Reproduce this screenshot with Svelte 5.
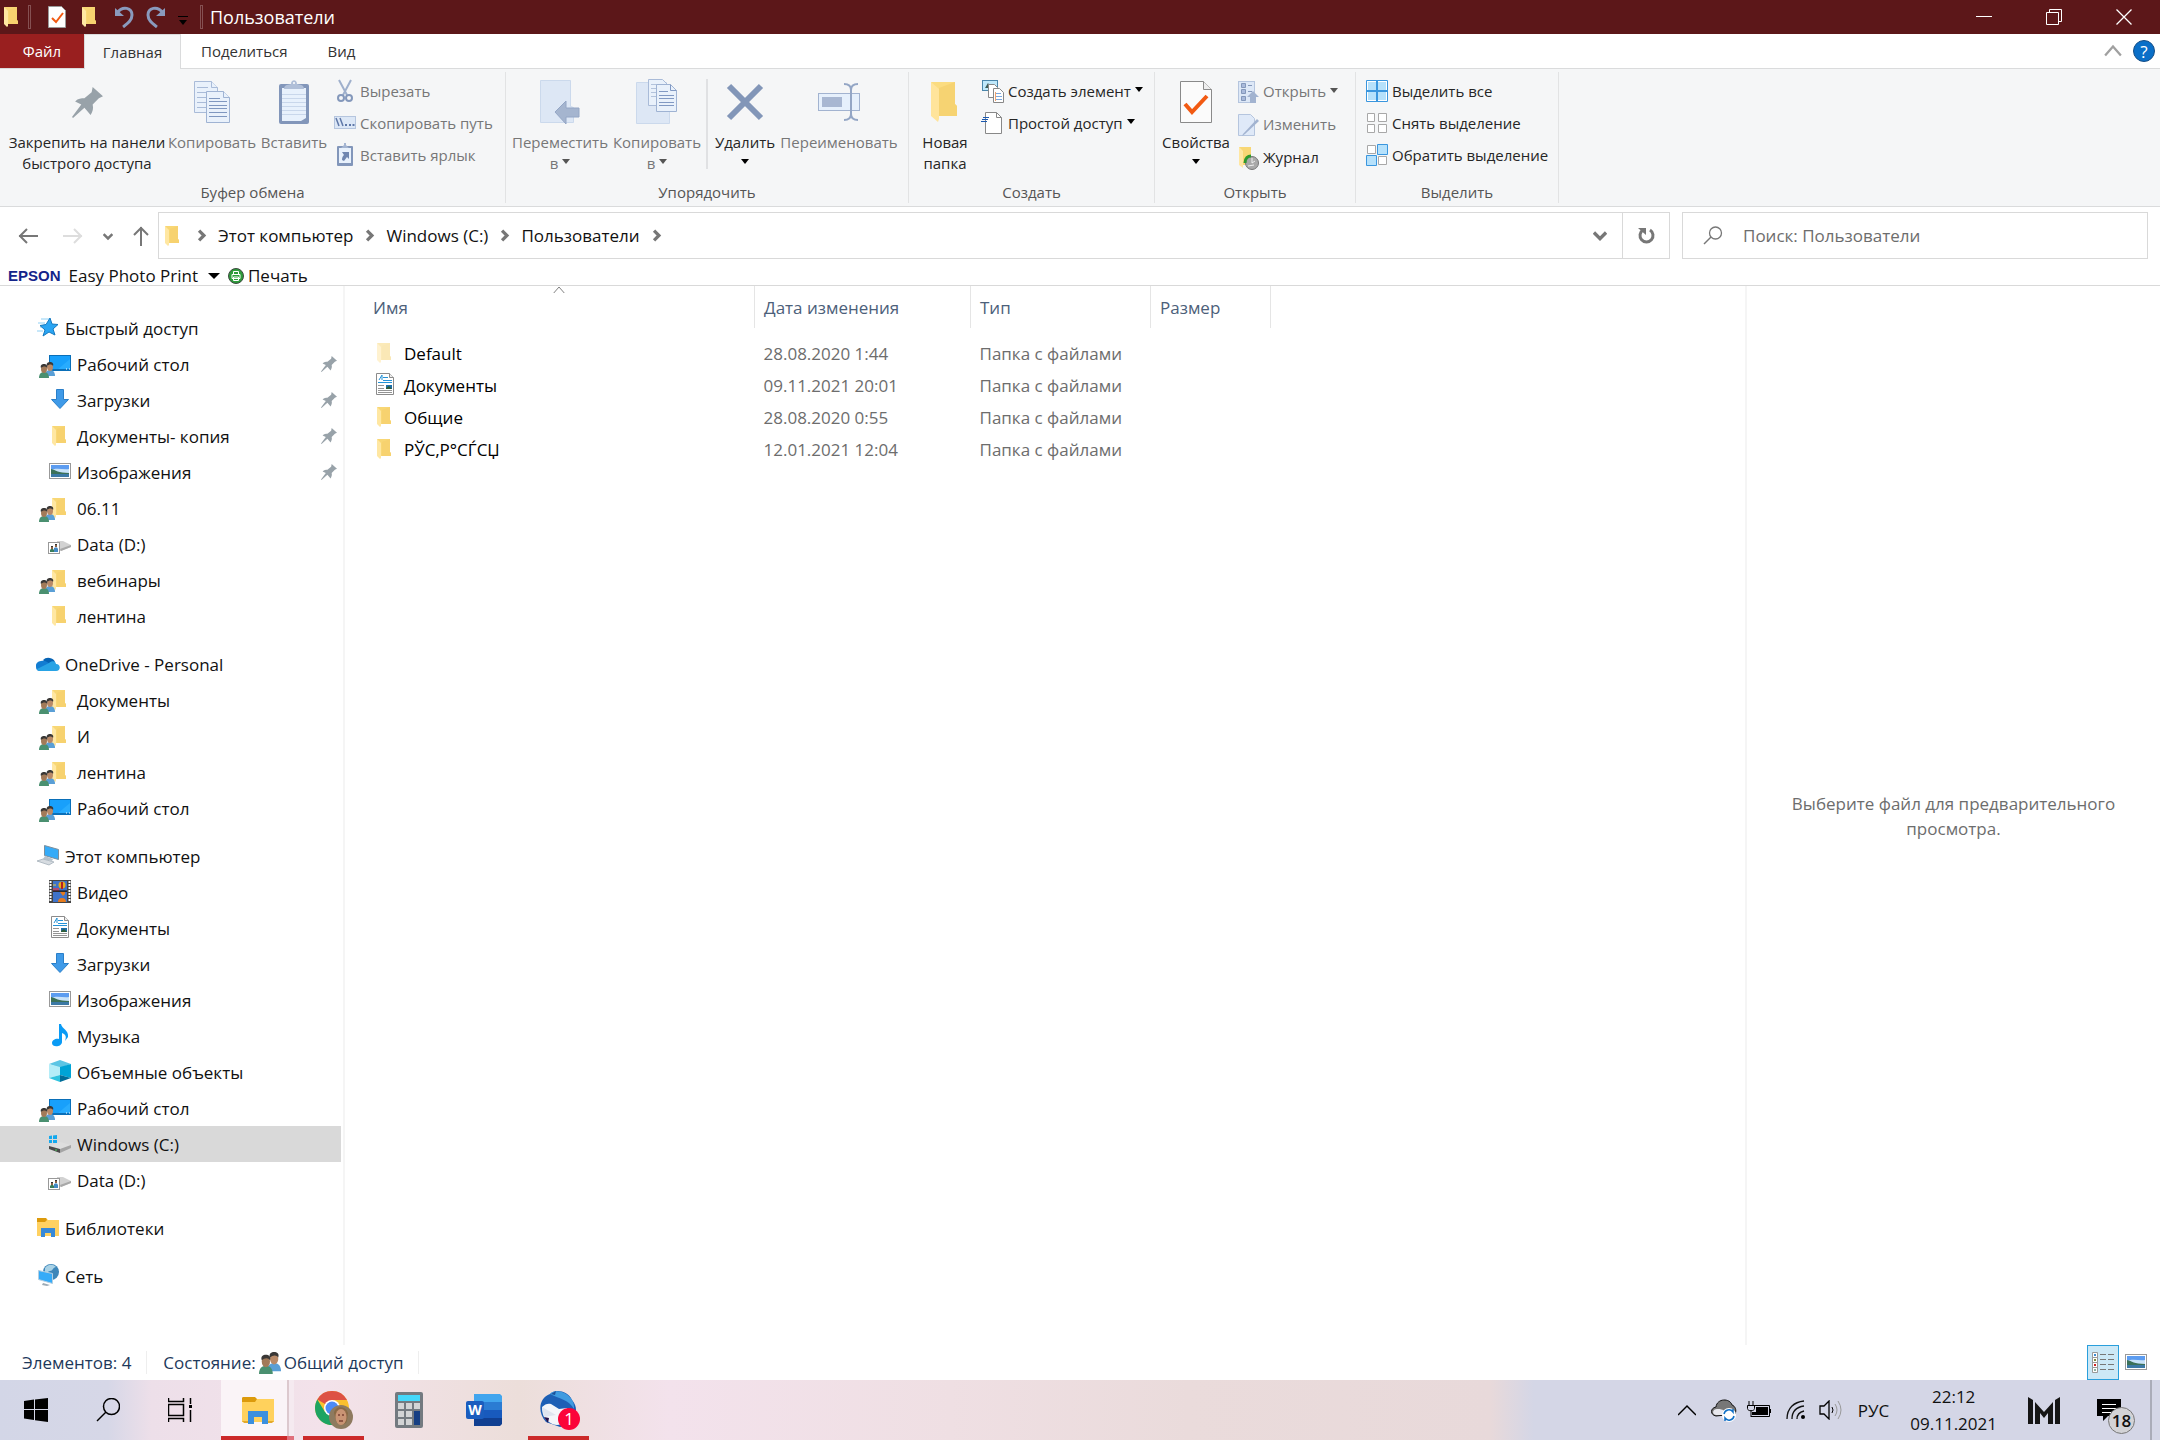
<script>
  const sidebar = [
    {
      label: 'Быстрый доступ',
      icon: 'star',
      items: [
        { label: 'Рабочий стол', icon: 'desktop', shared: true, pinned: true },
        { label: 'Загрузки', icon: 'download', pinned: true },
        { label: 'Документы- копия', icon: 'folder', pinned: true },
        { label: 'Изображения', icon: 'picture', pinned: true },
        { label: '06.11', icon: 'folder', shared: true },
        { label: 'Data (D:)', icon: 'drive' },
        { label: 'вебинары', icon: 'folder', shared: true },
        { label: 'лентина', icon: 'folder' }
      ]
    },
    {
      label: 'OneDrive - Personal',
      icon: 'onedrive',
      items: [
        { label: 'Документы', icon: 'folder', shared: true },
        { label: 'И', icon: 'folder', shared: true },
        { label: 'лентина', icon: 'folder', shared: true },
        { label: 'Рабочий стол', icon: 'desktop', shared: true }
      ]
    },
    {
      label: 'Этот компьютер',
      icon: 'computer',
      items: [
        { label: 'Видео', icon: 'video' },
        { label: 'Документы', icon: 'document' },
        { label: 'Загрузки', icon: 'download' },
        { label: 'Изображения', icon: 'picture' },
        { label: 'Музыка', icon: 'music' },
        { label: 'Объемные объекты', icon: 'cube' },
        { label: 'Рабочий стол', icon: 'desktop', shared: true },
        { label: 'Windows (C:)', icon: 'windrive' },
        { label: 'Data (D:)', icon: 'drive' }
      ]
    },
    { label: 'Библиотеки', icon: 'library', items: [] },
    { label: 'Сеть', icon: 'network', items: [] }
  ]

  const files = [
    { name: 'Default', date: '28.08.2020 1:44', type: 'Папка с файлами', icon: 'folder', faded: true },
    { name: 'Документы', date: '09.11.2021 20:01', type: 'Папка с файлами', icon: 'document' },
    { name: 'Общие', date: '28.08.2020 0:55', type: 'Папка с файлами', icon: 'folder' },
    { name: 'РЎС‚Р°СЃСЏ', date: '12.01.2021 12:04', type: 'Папка с файлами', icon: 'folder' }
  ]

  const crumbs = ['Этот компьютер', 'Windows (C:)', 'Пользователи']

  let selected = $state('Windows (C:)')
  let query = $state('')
</script>

{#snippet person(x, y, shirt, skin)}
  <g transform="translate({x} {y})">
    <path d="M0 14c0-4 2-6 5-6s5 2 5 6z" fill={shirt} />
    <ellipse cx="5" cy="5" rx="3" ry="4" fill={skin} />
    <path d="M2 4C1 1 3 0 5 0s4 1 3 4C7 2 4 2 2 4z" fill="#3a3836" />
  </g>
{/snippet}

{#snippet people(size)}
  <svg class="icon" width={size} height={size} viewBox="0 0 16 16" aria-hidden="true">
    {@render person(6, 0, '#5a9fd6', '#b98a68')}
    {@render person(0, 2, '#4a9070', '#a27a58')}
  </svg>
{/snippet}

{#snippet pin(size)}
  <svg class="icon" width={size} height={size} viewBox="0 0 30 30" aria-hidden="true">
    <path d="M20 0l10 9-4 2-6 6c1 4 0 7-2 10l-6-7L1 30l-1-1L9 17 3 14c3-3 6-3 9-3l7-6z" fill="#98a2a9" />
  </svg>
{/snippet}

{#snippet chevron(size, d, color, width)}
  <svg class="icon" width={size} height={size} viewBox="0 0 16 16" aria-hidden="true">
    <path {d} fill="none" stroke={color} stroke-width={width} />
  </svg>
{/snippet}

{#snippet caret(color)}
  <svg class="caret" width="8" height="5" viewBox="0 0 8 5" aria-hidden="true"><path d="M0 0h8L4 5z" fill={color} /></svg>
{/snippet}

{#snippet tile(name)}
  {#if name === 'folder'}
    <svg class="icon" width="24" height="24" viewBox="0 0 24 24" aria-hidden="true">
      <path d="M4 2h13v13l1 1v3H8z" fill="#f8d775" />
      <path d="M9 5l8-3v13l1 1v3H9z" fill="#f6cf6b" opacity=".6" />
      <path d="M4 2l4 4v15l-1 1-3-3z" fill="#ffe7a2" />
    </svg>
  {:else if name === 'star'}
    <svg class="icon" width="24" height="24" viewBox="0 0 24 24" aria-hidden="true">
      <path d="M5 3h9M2 7h7M4 11h6M1 15h6" stroke="#8fd0f5" stroke-width="1" />
      <path d="M14 2l2 6 6 .5-5 4.500 2 6-6-3-6 4 2-6-5-4.500 6-1z" fill="#2aa5f3" stroke="#1579c0" />
    </svg>
  {:else if name === 'desktop'}
    <svg class="icon" width="24" height="24" viewBox="0 0 24 24" aria-hidden="true">
      <rect x="1.500" y="3.500" width="21" height="15" fill="#18a0fb" stroke="#0a6fb8" />
      <path d="M9 18L22 7v11z" fill="#2fb0ff" opacity=".7" />
      <path d="M2 17.500h20" stroke="#0a6fb8" /><path d="M18 17h1M21 17h1" stroke="#fff" />
    </svg>
  {:else if name === 'download'}
    <svg class="icon" width="24" height="24" viewBox="0 0 24 24" aria-hidden="true">
      <path d="M8.500 1.500h7v10h5L12 20.500l-8.500-9h5z" fill="#3f9ae8" stroke="#2a7fc9" />
    </svg>
  {:else if name === 'picture'}
    <svg class="icon" width="24" height="24" viewBox="0 0 24 24" aria-hidden="true">
      <rect x="1.500" y="3.500" width="21" height="15" fill="#fff" stroke="#999" />
      <rect x="3" y="5" width="18" height="12" fill="#5c9cf0" />
      <path d="M3 10c6-3 12 0 18-1v4H3z" fill="#c8e2f8" />
      <path d="M3 9c5 1 7 4 18 4v1H3z" fill="#3c7158" />
      <path d="M3 14h18v3H3z" fill="#3c79a5" />
    </svg>
  {:else if name === 'drive'}
    <svg class="icon" width="24" height="24" viewBox="0 0 24 24" aria-hidden="true">
      <path d="M9 9h6l8 4v2l-10 4H9z" fill="#d2d2d2" /><path d="M12 17l11-4v2l-10 4z" fill="#a8a8a8" />
      <rect x=".5" y="10.500" width="11" height="11" fill="#fff" stroke="#999" />
      <path d="M2 20v-2q2-3 4 0v2z" fill="#3a7d5b" /><path d="M6 20v-4q3-2 4 1v3z" fill="#4389c4" />
      <path d="M3 16h2M7 14h2" stroke="#8d6243" stroke-width="2" /><path d="M3 14.500h2M7 12.500h2" stroke="#333" />
    </svg>
  {:else if name === 'windrive'}
    <svg class="icon" width="24" height="24" viewBox="0 0 24 24" aria-hidden="true">
      <path d="M1 14l11-4 11 3-11 4z" fill="#dedede" /><path d="M1 14l11 3v4L1 17z" fill="#4a4a4a" />
      <path d="M12 17l11-4v3l-11 5z" fill="#a5a5a5" /><path d="M7 18h2" stroke="#4ad35b" />
      <path d="M1 4l3-.5V7H1zM5 3.400L9 3v4H5zM1 8h3v3H1zM5 8h4v3H5z" fill="#14a9ee" />
    </svg>
  {:else if name === 'onedrive'}
    <svg class="icon" width="24" height="24" viewBox="0 0 24 24" aria-hidden="true">
      <path d="M7 8a7 6 0 0 1 12 2l-6 5z" fill="#0663b4" />
      <path d="M0 15a5 5 0 0 1 5-6c4-1 6 1 9 3l-8 7H4a4 4 0 0 1-4-4z" fill="#127dd2" />
      <path d="M13 11c3-3 7-2 7 1 5 0 5 7 0 7H5c-3 0-4-1-4-2z" fill="#28a3e5" />
    </svg>
  {:else if name === 'computer'}
    <svg class="icon" width="24" height="24" viewBox="0 0 24 24" aria-hidden="true">
      <path d="M8.500 1.500l14 4v10l-14-4z" fill="#35abf8" stroke="#7b8f9e" />
      <path d="M9 12l8 3-1 2-9-2z" fill="#b7c2cc" />
      <path d="M1 17l6-2 11 3-5 3z" fill="#d7dce1" stroke="#9ba7b2" stroke-width=".7" />
    </svg>
  {:else if name === 'video'}
    <svg class="icon" width="24" height="24" viewBox="0 0 24 24" aria-hidden="true">
      <path d="M1 0h22v23H1z" fill="#444" /><path d="M5 1h14v10H5zM5 12h14v10H5z" fill="#3f73c9" />
      <path d="M2.500 1v21M21.500 1v21" stroke="#fff" stroke-width="2" stroke-dasharray="2 1" />
      <circle cx="14" cy="5" r="3.500" fill="#e8a91a" /><path d="M13 2h2v7h-2z" fill="#b52222" />
      <path d="M5 8h6v3H5z" fill="#b04c72" /><path d="M12 12h5v2l-2 2zM10 22a4 4 0 0 1 8 0z" fill="#e57b1d" />
      <path d="M5 5h3" stroke="#e9c83d" /><path d="M5 11h14" stroke="#111" />
    </svg>
  {:else if name === 'document'}
    <svg class="icon" width="24" height="24" viewBox="0 0 24 24" aria-hidden="true">
      <path d="M3.500.5h13l4 4v17h-17z" fill="#fff" stroke="#8b8b8b" /><path d="M16.500.5v4h4" fill="#eee" stroke="#8b8b8b" />
      <path d="M6 7l3-5v5M10 4.500h5M10 7.500h9M5 9.500h14" fill="none" stroke="#2492d6" />
      <path d="M5 12.500h6M5 15.500h6M5 17.500h14M5 19.500h14" stroke="#949494" /><path d="M13 12h6v4h-6z" fill="#1e6ea8" /><path d="M13 15l3-2 3 3h-6z" fill="#2f5d39" />
    </svg>
  {:else if name === 'music'}
    <svg class="icon" width="24" height="24" viewBox="0 0 24 24" aria-hidden="true">
      <path d="M11 0h2c1 5 8 6 7 13l-3 4c2-5 0-7-3-8v9c0 5-10 6-10 1 0-3 4-5 7-4z" fill="#0a9bf5" />
    </svg>
  {:else if name === 'cube'}
    <svg class="icon" width="24" height="24" viewBox="0 0 24 24" aria-hidden="true">
      <path d="M1 4l11-4 11 4-11 4z" fill="#5cc5e4" /><path d="M1 4l11 3v8L1 18z" fill="#b4edf8" /><path d="M23 4L12 7v8l11 3z" fill="#00a4d6" />
      <path d="M12 15L1 18l11 4z" fill="#30c3df" /><path d="M12 15l11 3-11 4z" fill="#006d99" />
    </svg>
  {:else if name === 'library'}
    <svg class="icon" width="24" height="24" viewBox="0 0 24 24" aria-hidden="true">
      <path d="M1 2h9l2 2h11v16H1z" fill="#ffd161" /><path d="M1 2h9l1 2-2 2H1z" fill="#dc9a0c" />
      <path d="M5 12h14v9h-4v-4H9v4H5z" fill="#3789d8" />
    </svg>
  {:else if name === 'network'}
    <svg class="icon" width="24" height="24" viewBox="0 0 24 24" aria-hidden="true">
      <circle cx="15" cy="8" r="8" fill="#3d86b9" /><path d="M9 4c3-4 8-4 11-1-3 0-3 4-6 4s-2 4-5 3z" fill="#a9d2e6" />
      <path d="M2.500 6.500l14 3v10l-14-4z" fill="#35abf8" stroke="#b6cfe0" /><path d="M7 19l7 2-3 1-5-1z" fill="#9eabb5" />
    </svg>
  {/if}
{/snippet}

<div class="window">
  <header class="titlebar">
    <div class="quick">
      <span class="app-icon">{@render tile('folder')}</span>
      <i class="bar"></i>
      <button aria-label="Свойства">
        <svg class="icon" width="18" height="22" viewBox="0 0 18 22" aria-hidden="true">
          <path d="M.5.5h13l4 4v17H.5z" fill="#fff" stroke="#9a9a9a" /><path d="M4 12l4 4 7-9" fill="none" stroke="#f25a12" stroke-width="2" />
        </svg>
      </button>
      <button aria-label="Новая папка">{@render tile('folder')}</button>
      <button aria-label="Отменить">
        <svg class="icon" width="20" height="22" viewBox="0 0 20 22" aria-hidden="true">
          <path d="M3 7C9-1 18 2 18 9c0 5-4 8-9 12" fill="none" stroke="#8a9abd" stroke-width="3" /><path d="M1 2v8h9z" fill="#8a9abd" />
        </svg>
      </button>
      <button aria-label="Вернуть">
        <svg class="icon" width="20" height="22" viewBox="0 0 20 22" aria-hidden="true">
          <path d="M17 7C11-1 2 2 2 9c0 5 4 8 9 12" fill="none" stroke="#8a9abd" stroke-width="3" /><path d="M19 2v8h-9z" fill="#8a9abd" />
        </svg>
      </button>
      <button aria-label="Настройка панели">
        <svg class="icon" width="10" height="16" viewBox="0 0 10 16" aria-hidden="true"><path d="M0 7.500h10" stroke="#000" /><path d="M1 11h8l-4 5z" fill="#000" /></svg>
      </button>
      <i class="bar"></i>
    </div>
    <h1>Пользователи</h1>
    <div class="window-buttons">
      <button aria-label="Свернуть"><svg width="16" height="16" viewBox="0 0 16 16"><path d="M0 7.500h16" stroke="#fff" /></svg></button>
      <button aria-label="Восстановить"><svg width="16" height="16" viewBox="0 0 16 16"><path d="M.5 3.500h12v12H.5zM3.500 3V.5h12v12H13" fill="none" stroke="#fff" /></svg></button>
      <button aria-label="Закрыть"><svg width="16" height="16" viewBox="0 0 16 16"><path d="M.5.5l15 15M15.500.5l-15 15" stroke="#fff" stroke-width="1.300" /></svg></button>
    </div>
  </header>

  <nav class="tabs" aria-label="Лента">
    <button class="file">Файл</button>
    <button class="current">Главная</button>
    <button>Поделиться</button>
    <button>Вид</button>
    <div class="tabs-end">
      <button aria-label="Свернуть ленту">{@render chevron(18, 'M1 12l7-8 7 8', '#a0a0a0', 2)}</button>
      <button class="help" aria-label="Справка">?</button>
    </div>
  </nav>

  <div class="ribbon">
    <section class="group clipboard">
      <div class="tools">
        <button class="big pin-tool">
          <span class="art">{@render pin(31)}</span>
          <span>Закрепить на панели<br />быстрого доступа</span>
        </button>
        <button class="big copy" disabled>
          <span class="art">
            <svg width="36" height="42" viewBox="0 0 36 42" aria-hidden="true">
              <g fill="#e9f1fb" stroke="#a9bbd8"><path d="M.5.5h17l6 6v25H.5z" /><path d="M17.500.5v6h6" /><path d="M3 6.500h11M3 11.500h14M3 16.500h14M3 21.500h14M3 26.500h14" /></g>
              <g fill="#e9f1fb" stroke="#9fb3d3"><path d="M12.500 10.500h17l6 6v25h-23z" /><path d="M29.500 10.500v6h6" /><path d="M15 17.500h11M15 20.500h18M15 24.500h18M15 27.500h18M15 31.500h18M15 35.500h18" stroke="#7f97c0" /></g>
            </svg>
          </span>
          <span>Копировать</span>
        </button>
        <button class="big paste" disabled>
          <span class="art">
            <svg width="30" height="44" viewBox="0 0 30 44" aria-hidden="true">
              <rect y="4" width="30" height="40" rx="2" fill="#8296ba" /><path d="M3 8h24v30l-5 3H3z" fill="#e8f1fc" />
              <path d="M3 14.500h24M3 18.500h24M3 22.500h24M3 26.500h24M3 30.500h24M3 34.500h24" stroke="#c9d7eb" />
              <path d="M5 9c0-5 5-4 7-5 0-5 6-5 6 0 2 1 7 0 7 5z" fill="#b0bfd8" /><circle cx="15" cy="3" r="1" fill="#fff" />
            </svg>
          </span>
          <span>Вставить</span>
        </button>
        <div class="stack">
          <button disabled>
            <svg class="icon" width="22" height="24" viewBox="0 0 22 24" aria-hidden="true">
              <path d="M5 1l8 15M17 1L9 16" stroke="#9fb0cc" stroke-width="2" /><circle cx="7" cy="19" r="3" fill="none" stroke="#8498bb" stroke-width="2" /><circle cx="15" cy="19" r="3" fill="none" stroke="#8498bb" stroke-width="2" />
            </svg>
            Вырезать
          </button>
          <button disabled>
            <svg class="icon" width="22" height="14" viewBox="0 0 22 14" aria-hidden="true">
              <rect x=".5" y=".5" width="21" height="12" fill="#dce7f6" stroke="#b5c5de" /><path d="M2 2l3 8M6 2l3 8" stroke="#5f78a8" stroke-width="1.500" /><path d="M11 9h2M15 9h2M18.500 9h2" stroke="#5f78a8" stroke-width="2" />
            </svg>
            Скопировать путь
          </button>
          <button disabled>
            <svg class="icon" width="22" height="24" viewBox="0 0 22 24" aria-hidden="true">
              <rect x="3" y="3" width="16" height="20" rx="1" fill="#8296ba" /><path d="M5 5h12v15H5z" fill="#e8f1fc" /><path d="M7 5l3-3V0h2v2l3 3z" fill="#a4b5d2" />
              <path d="M8 9h7v7l-2-2-3 4-2-1c0-3 1-4 2-5z" fill="#6f86b0" />
            </svg>
            Вставить ярлык
          </button>
        </div>
      </div>
      <h2>Буфер обмена</h2>
    </section>

    <section class="group organize">
      <div class="tools">
        <button class="big move" disabled>
          <span class="art">
            <svg width="40" height="44" viewBox="0 0 40 44" aria-hidden="true">
              <path d="M.5.5h30v26l3 1v15H.5z" fill="#dde7f5" stroke="#cbd9ec" /><path d="M15 32l11-11v7h13v9H26v7z" fill="#a5b5cf" stroke="#94a6c5" />
            </svg>
          </span>
          <span>Переместить<br />в {@render caret('#555')}</span>
        </button>
        <button class="big copy" disabled>
          <span class="art">
            <svg width="42" height="46" viewBox="0 0 42 46" aria-hidden="true">
              <path d="M.5 3.500h30v27l3 1v13H.5z" fill="#dde7f5" stroke="#cbd9ec" />
              <path d="M12.500.5h14l5 5v21h-19z" fill="#e9f1fb" stroke="#a9bbd8" /><path d="M15 5.500h9M15 9.500h9M15 13.500h9M15 17.500h9" stroke="#b3c3dc" />
              <path d="M20.500 5.500h14l6 6v21h-20z" fill="#e9f1fb" stroke="#9fb3d3" /><path d="M34.500 5.500v6h6M23 12.500h9M23 16.500h15M23 19.500h15M23 23.500h15M23 26.500h15" fill="none" stroke="#8199c3" />
            </svg>
          </span>
          <span>Копировать<br />в {@render caret('#555')}</span>
        </button>
        <i class="divider"></i>
        <button class="big delete">
          <span class="art">
            <svg width="38" height="38" viewBox="0 0 38 38" aria-hidden="true"><path d="M3 3l32 32M35 3L3 35" stroke="#8296b8" stroke-width="6" /></svg>
          </span>
          <span>Удалить<br />{@render caret('#000')}</span>
        </button>
        <button class="big rename" disabled>
          <span class="art">
            <svg width="42" height="40" viewBox="0 0 42 40" aria-hidden="true">
              <rect x=".5" y="11.500" width="41" height="17" fill="#e6f0fc" stroke="#a2b3d0" /><path d="M4 15h20v10H4z" fill="#a8b7d2" />
              <path d="M26 2c5 0 7 2 7 6v24c0 4-2 6-7 6M40 2c-5 0-7 2-7 6v24c0 4 2 6 7 6" fill="none" stroke="#94a6c5" stroke-width="2" />
            </svg>
          </span>
          <span>Переименовать</span>
        </button>
      </div>
      <h2>Упорядочить</h2>
    </section>

    <section class="group create">
      <div class="tools">
        <button class="big new-folder">
          <span class="art">
            <svg width="30" height="42" viewBox="0 0 30 42" aria-hidden="true">
              <path d="M1 1h24v22l2 2v10H8z" fill="#fbdc80" /><path d="M9 7l16-6v22l2 2v10H9z" fill="#f3cf6c" opacity=".7" /><path d="M1 1l8 7v30l-1 3-7-6z" fill="#ffe49b" />
            </svg>
          </span>
          <span>Новая<br />папка</span>
        </button>
        <div class="stack">
          <button>
            <svg class="icon" width="23" height="24" viewBox="0 0 23 24" aria-hidden="true">
              <rect x="1.500" y="1.500" width="15" height="10" fill="#bfe8fa" stroke="#4a86ab" /><path d="M4 9l3-5 3 5z" fill="#3c5c58" />
              <path d="M7.500 5.500h6l3 3v10h-9z" fill="#fff" stroke="#888" /><path d="M12.500 9.500h6l4 4v10h-10z" fill="#fff" stroke="#888" /><path d="M15 14.500h5M15 17.500h6M15 20.500h6" stroke="#7aa7dd" /><path d="M14.500 13v9" stroke="#f2a26a" />
            </svg>
            Создать элемент {@render caret('#000')}
          </button>
          <button>
            <svg class="icon" width="23" height="24" viewBox="0 0 23 24" aria-hidden="true">
              <path d="M4.500 1.500h11l5 5v16h-16z" fill="#fff" stroke="#888" /><path d="M15.500 1.500v5h5" fill="none" stroke="#888" /><path d="M2 6.500h6M1 8.500h6M0 10.500h6" stroke="#1c59b0" />
            </svg>
            Простой доступ {@render caret('#000')}
          </button>
        </div>
      </div>
      <h2>Создать</h2>
    </section>

    <section class="group open">
      <div class="tools">
        <button class="big props">
          <span class="art">
            <svg width="32" height="42" viewBox="0 0 32 42" aria-hidden="true">
              <path d="M.5.5h23l8 8v33H.5z" fill="#fbfbfb" stroke="#8a8a8a" /><path d="M23.500.5v8h8" fill="#eee" stroke="#8a8a8a" /><path d="M5 23l7 8 15-16" fill="none" stroke="#f25a12" stroke-width="4" />
            </svg>
          </span>
          <span>Свойства<br />{@render caret('#000')}</span>
        </button>
        <div class="stack">
          <button disabled>
            <svg class="icon" width="21" height="24" viewBox="0 0 21 24" aria-hidden="true">
              <rect x=".5" y="1.500" width="16" height="21" fill="#dde8f7" stroke="#b5c5de" /><path d="M3.500 3.500h4v4h-4zM3.500 9.500h4v4h-4zM3.500 16.500h4v4h-4z" fill="#a9badb" stroke="#8498bb" /><path d="M10 5.500h4M10 11.500h4" stroke="#8498bb" /><path d="M12 23v-6H9l6-6 6 6h-3v6z" fill="#a2b3d0" />
            </svg>
            Открыть {@render caret('#555')}
          </button>
          <button disabled>
            <svg class="icon" width="21" height="24" viewBox="0 0 21 24" aria-hidden="true">
              <path d="M.5 1.500h12l4 4v17H.5z" fill="#dfe9f8" stroke="#b5c5de" /><path d="M19 6L5 21l-1 2 3-2L21 8z" fill="#a2b3d0" />
            </svg>
            Изменить
          </button>
          <button>
            <svg class="icon" width="21" height="24" viewBox="0 0 21 24" aria-hidden="true">
              <path d="M1 1h12v18H4z" fill="#f8d775" /><path d="M1 1l4 4v17l-4-3z" fill="#ffe7a2" />
              <circle cx="14" cy="17" r="6.500" fill="#a9a9a9" stroke="#777" /><path d="M14 12v5l3-2M10 20l6-1" fill="none" stroke="#eee" /><path d="M7 17c0-5 3-7 6-7" fill="none" stroke="#2e9a2e" stroke-width="3" />
            </svg>
            Журнал
          </button>
        </div>
      </div>
      <h2>Открыть</h2>
    </section>

    <section class="group select">
      <div class="tools">
        <div class="stack">
          <button>
            <svg class="icon" width="22" height="22" viewBox="0 0 22 22" aria-hidden="true"><path d="M.5.5h21v21H.5z" fill="#fff" stroke="#3a96de" /><path d="M2 2h8v8H2zM12 2h8v8h-8zM2 12h8v8H2zM12 12h8v8h-8z" fill="#b6e1fb" /><path d="M11 0v22M0 11h22" stroke="#3a96de" stroke-width="2" /></svg>
            Выделить все
          </button>
          <button>
            <svg class="icon" width="22" height="22" viewBox="0 0 22 22" aria-hidden="true"><path d="M1.500 1.500h7v8h-7zM12.500 1.500h8v8h-8zM1.500 12.500h7v8h-7zM12.500 12.500h8v8h-8z" fill="#fff" stroke="#a8a8a8" /></svg>
            Снять выделение
          </button>
          <button>
            <svg class="icon" width="22" height="22" viewBox="0 0 22 22" aria-hidden="true"><path d="M1.500 1.500h8v8h-8zM12.500 12.500h8v8h-8z" fill="#fff" stroke="#a8a8a8" /><path d="M11.500.5h10v10h-10zM.5 11.500h10v10H.5z" fill="#b6e1fb" stroke="#3a96de" /></svg>
            Обратить выделение
          </button>
        </div>
      </div>
      <h2>Выделить</h2>
    </section>
  </div>

  <div class="address-row">
    <div class="history">
      <button aria-label="Назад"><svg width="20" height="16" viewBox="0 0 20 16"><path d="M1 8h19M9 1L2 8l7 7" fill="none" stroke="#777" stroke-width="2" /></svg></button>
      <button class="forward" aria-label="Вперед" disabled><svg width="20" height="16" viewBox="0 0 20 16"><path d="M0 8h19M11 1l7 7-7 7" fill="none" stroke="#ddd" stroke-width="2" /></svg></button>
      <button aria-label="Последние расположения">{@render chevron(10, 'M1 5l7 7 7-7', '#777', 4)}</button>
      <button aria-label="Вверх"><svg width="16" height="20" viewBox="0 0 16 20"><path d="M8 1v19M1 9l7-7 7 7" fill="none" stroke="#777" stroke-width="2" /></svg></button>
    </div>
    <div class="address">
      {@render tile('folder')}
      {@render chevron(13, 'M5 2l6 6-6 6', '#777', 4)}
      {#each crumbs as crumb}
        <button class="crumb">{crumb}</button>
        {@render chevron(13, 'M5 2l6 6-6 6', '#777', 4)}
      {/each}
      <button class="drop" aria-label="Предыдущие расположения">{@render chevron(14, 'M1 4l7 7 7-7', '#777', 4)}</button>
      <button class="refresh" aria-label="Обновить">
        <svg width="18" height="18" viewBox="0 0 18 18"><path d="M6 3a6.500 6.500 0 1 0 7 0" fill="none" stroke="#777" stroke-width="3" /><path d="M1 1h8v7z" fill="#777" /></svg>
      </button>
    </div>
    <label class="search">
      <svg width="20" height="20" viewBox="0 0 20 20" aria-hidden="true"><circle cx="12.500" cy="7" r="6" fill="none" stroke="#777" stroke-width="1.300" /><path d="M8 11l-7 7" stroke="#777" stroke-width="1.500" /></svg>
      <input type="text" placeholder="Поиск: Пользователи" aria-label="Поиск: Пользователи" bind:value={query} />
    </label>
  </div>

  <div class="print-bar">
    <strong>EPSON</strong>
    <button>Easy Photo Print <svg class="big-caret" width="12" height="6" viewBox="0 0 12 6" aria-hidden="true"><path d="M0 0h12L6 6z" /></svg></button>
    <button>
      <svg class="icon" width="16" height="16" viewBox="0 0 16 16" aria-hidden="true">
        <circle cx="8" cy="8" r="7.500" fill="#2d9b3a" stroke="#3e4a40" /><path d="M5.500 6V3.500h5V6M4 6.500h8v4H4zM5.500 9h5v3.500h-5z" fill="none" stroke="#fff" />
      </svg>
      Печать
    </button>
  </div>

  <main>
    <nav class="sidebar" aria-label="Область навигации">
      {#each sidebar as group}
        <ul>
          <li>
            <button class="row root">{@render tile(group.icon)}{group.label}</button>
          </li>
          {#each group.items as item}
            <li>
              <button class="row" class:selected={selected === item.label} onclick={() => (selected = item.label)}>
                <span class="tile">
                  {@render tile(item.icon)}
                  {#if item.shared}<span class="shared">{@render people(16)}</span>{/if}
                </span>
                {item.label}
                {#if item.pinned}<span class="pinned">{@render pin(16)}</span>{/if}
              </button>
            </li>
          {/each}
        </ul>
      {/each}
    </nav>

    <div class="content">
      <table>
        <thead>
          <tr>
            <th class="name">
              <span class="sort">{@render chevron(12, 'M1 12l7-8 7 8', '#555', 1)}</span>
              Имя
            </th>
            <th class="date">Дата изменения</th>
            <th class="type">Тип</th>
            <th class="size">Размер</th>
          </tr>
        </thead>
        <tbody>
          {#each files as file}
            <tr>
              <td class="file-name"><span class="file-icon" class:faded={file.faded}>{@render tile(file.icon)}</span>{file.name}</td>
              <td>{file.date}</td>
              <td>{file.type}</td>
              <td></td>
            </tr>
          {/each}
        </tbody>
      </table>
    </div>

    <aside>
      <p>Выберите файл для предварительного просмотра.</p>
    </aside>
  </main>

  <footer class="status">
    <span class="cell">Элементов: 4</span>
    <span class="cell">Состояние: {@render people(22)} Общий доступ</span>
    <div class="views">
      <button class="active" aria-label="Таблица">
        <svg width="22" height="22" viewBox="0 0 22 22">
          <path d="M.5.5h5v5h-5zM.5 5.500h5v5h-5zM.5 10.500h5v5h-5zM.5 15.500h5v5h-5z" fill="#fff" stroke="#999" />
          <path d="M2 3h2" stroke="#3a8cd0" stroke-width="2" /><path d="M2 8h2" stroke="#7d8a3e" stroke-width="2" /><path d="M2 13h2" stroke="#c22" stroke-width="2" /><path d="M2 18h2" stroke="#8ab09e" stroke-width="2" />
          <path d="M8 2.500h6M16 2.500h6M8 7.500h6M16 7.500h6M8 12.500h6M16 12.500h6M8 17.500h6M16 17.500h6" stroke="#777" />
        </svg>
      </button>
      <button aria-label="Крупные значки">{@render tile('picture')}</button>
    </div>
  </footer>

  <div class="taskbar">
    <button class="task" aria-label="Пуск"><svg width="24" height="24" viewBox="0 0 24 24"><path d="M0 3l10-1.500V11H0zM11 1.400L24 0v11H11zM0 12h10v10L0 20.500zM11 12h13v12l-13-1.700z" /></svg></button>
    <button class="task" aria-label="Поиск"><svg width="24" height="24" viewBox="0 0 24 24"><circle cx="15.500" cy="8.500" r="8" fill="none" stroke="#000" stroke-width="1.500" /><path d="M10 14L1 23" stroke="#000" stroke-width="1.500" /></svg></button>
    <button class="task" aria-label="Представление задач"><svg width="24" height="24" viewBox="0 0 24 24"><path d="M.5 0v3.500h15V0M.5 6.500h15v11H.5zM.5 24v-3.500h15V24M22.500 0v6M22.500 12v12" fill="none" stroke="#000" stroke-width="1.500" /><path d="M21 7h3v3h-3z" /></svg></button>
    <button class="task app explorer" aria-label="Проводник">
      <svg width="32" height="28" viewBox="0 0 32 28"><path d="M0 2h14v1h18v23H0z" fill="#ffd15c" /><path d="M0 2c0-1 1-1 2-1h11l2 2-2 3H0z" fill="#dc9a0c" /><path d="M6 15h20v13h-6v-7h-8v7H6z" fill="#3b8fde" /><path d="M0 25h6v2H2zM26 25h6l-2 2h-4z" fill="#e3aa2b" /></svg>
    </button>
    <button class="task app running" aria-label="Google Chrome">
      <svg width="40" height="40" viewBox="0 0 40 40">
        <circle cx="18" cy="18" r="17" fill="#fbc02d" /><path d="M18 18L3.300 9.500A17 17 0 0 1 33 10H18z" fill="#dd5144" /><path d="M3.300 9.500A17 17 0 0 0 18 35l7-13-14 0z" fill="#1da462" />
        <circle cx="18" cy="18" r="8" fill="#fff" /><circle cx="18" cy="18" r="6.500" fill="#4c8bf5" />
        <circle cx="27" cy="27" r="12" fill="#8e7a5f" /><path d="M20 23c1-7 11-8 14 0l-1 8c-2 5-8 5-11 0z" fill="#8a6a45" /><ellipse cx="27" cy="27" rx="5.500" ry="8" fill="#c99474" /><path d="M24 25h2M28 25h2M25 31h4" stroke="#7b4234" stroke-width="1.300" />
      </svg>
    </button>
    <button class="task app" aria-label="Калькулятор">
      <svg width="28" height="36" viewBox="0 0 28 36"><rect width="28" height="36" rx="2" fill="#737a80" /><path d="M3 3h22v6H3z" fill="#45d8fa" /><path d="M3 11h6v6H3zM11 11h6v6h-6zM19 11h6v6h-6zM3 19h6v6H3zM11 19h6v6h-6zM3 27h6v6H3zM11 27h6v6h-6z" fill="#d2d4d5" /><path d="M19 19h6v14h-6z" fill="#163f83" /></svg>
    </button>
    <button class="task app" aria-label="Word">
      <svg width="36" height="34" viewBox="0 0 36 34"><path d="M8 1h26l2 2v6H8z" fill="#41a5ee" /><path d="M8 9h28v8H8z" fill="#2b7cd3" /><path d="M8 17h28v8H8z" fill="#185abd" /><path d="M8 25h28v6l-2 2H8z" fill="#103f91" /><rect y="8" width="18" height="18" rx="2" fill="#1a5dbe" /><text x="9" y="22" text-anchor="middle" font-size="14" font-weight="700" fill="#fff">W</text></svg>
    </button>
    <button class="task app running" aria-label="Thunderbird">
      <svg width="40" height="40" viewBox="0 0 40 40">
        <path d="M7 32C-2 22 0 8 11 4c4-5 18-4 22 6 5 6 5 12 2 18-3 6-9 9-14 9z" fill="#1d5fb5" />
        <path d="M11 4c4-5 17-3 22 6 2 3 2 6 2 9-5-9-14-10-24-15z" fill="#3f9be0" /><path d="M12 4l5-3-1 4z" fill="#1c4f98" />
        <path d="M3 17c3-3 6-4 9-3l8 5 8-1c2 3 2 9-2 14-5 4-11 4-16 0-5-3-7-8-7-15z" fill="#f4f6fa" /><path d="M3 17l14 8-12 2z" fill="#dfe5ef" /><path d="M5 27l5 1-1 5z" fill="#25104a" />
      </svg>
      <span class="badge">1</span>
    </button>

    <div class="tray">
      <button aria-label="Скрытые значки"><svg width="18" height="12" viewBox="0 0 18 12"><path d="M0 11l9-9 9 9" fill="none" stroke="#000" stroke-width="1.500" /></svg></button>
      <button aria-label="OneDrive">
        <svg width="26" height="24" viewBox="0 0 26 24"><path d="M5 18C-1 17-1 10 5 9c1-9 14-9 16-2 3 1 5 5 3 9z" fill="#777" stroke="#111" /><path d="M5 17c-5-1-3-7 2-6 5 0 7 2 10 6z" fill="#e8e8ee" /><circle cx="18" cy="17" r="7" fill="#fff" /><path d="M13 16a5 5 0 0 1 9-2v-3M23 18a5 5 0 0 1-9 2v3" fill="none" stroke="#0f6fc6" stroke-width="1.500" /></svg>
      </button>
      <button class="battery" aria-label="Батарея">
        <svg width="24" height="18" viewBox="0 0 24 18"><path d="M7 4.500h15.500v11H4" fill="none" stroke="#000" /><path d="M9 6h12v8H5v-3h4zM23 8h1v4h-1z" /><path d="M2 0v4M6 0v4M.5 4.500h7v3c0 3-7 3-7 0zM4 9v7" fill="none" stroke="#000" /></svg>
      </button>
      <button aria-label="Сеть">
        <svg width="20" height="20" viewBox="0 0 20 20"><path d="M1 19C1 8 8 2 18 1M6 19c0-8 5-12 12-13M11 19c0-4 3-7 7-8" fill="none" stroke="#111" stroke-width="1.300" /><circle cx="17" cy="17" r="2" /></svg>
      </button>
      <button class="sound" aria-label="Громкость">
        <svg width="24" height="20" viewBox="0 0 24 20"><path d="M1 6h4l5-5v18l-5-5H1z" fill="none" stroke="#000" stroke-width="1.300" /><path d="M13 7q2 3 0 6" fill="none" stroke="#000" /><path d="M16 4q4 6 0 12M19 1q6 9 0 18" fill="none" stroke="#999" /></svg>
      </button>
      <button class="lang">РУС</button>
      <button class="clock"><time>22:12</time><time>09.11.2021</time></button>
      <button class="brand" aria-label="Приложение">
        <svg width="32" height="27" viewBox="0 0 32 27"><path d="M0 0l5 3v24H0zM32 0l-5 3v24h5zM7 5l9 10 9-10v22h-5V16l-4 5-4-5v11H7z" fill="#151515" /></svg>
      </button>
      <button class="notes" aria-label="Уведомления">
        <svg width="24" height="24" viewBox="0 0 24 24"><path d="M0 1h24v17H11l-5 5v-5H0z" /><path d="M5 6.500h14M5 10.500h14M5 14.500h9" stroke="#fff" /></svg>
        <span class="count">18</span>
      </button>
    </div>
  </div>
</div>

<style>
  :global(body) {
    margin: 0;
    font-family: 'Open Sans', 'Noto Sans', sans-serif;
    font-size: 17px;
    color: #111;
    background: #fff;
  }

  .window {
    display: flex;
    flex-direction: column;
    min-height: 100vh;
  }

  button {
    display: flex;
    align-items: center;
    padding: 0;
    border: 0;
    background: none;
    font: inherit;
    color: inherit;
    white-space: nowrap;
  }

  svg {
    flex: none;
  }

  h1,
  h2,
  p,
  ul {
    margin: 0;
    padding: 0;
    font-weight: 400;
    list-style: none;
  }

  /* title bar */
  .titlebar {
    display: flex;
    align-items: center;
    height: 34px;
    background: #5c1719;
    color: #fff;
  }

  .quick {
    display: flex;
    align-items: center;
    gap: 12px;
    padding-right: 7px;
  }

  .app-icon {
    display: flex;
  }

  .bar {
    width: 1px;
    height: 22px;
    border: 1px solid #855052;
  }

  .quick .bar:first-of-type {
    margin-left: -8px;
    margin-right: 5px;
  }

  h1 {
    font-size: 18px;
  }

  .window-buttons {
    display: flex;
    margin-left: auto;
    padding-right: 1px;
  }

  .window-buttons button {
    justify-content: center;
    width: 70px;
    height: 34px;
  }

  /* ribbon */
  .tabs {
    display: flex;
    height: 34px;
    font-size: 15px;
    color: #333;
    border-bottom: 1px solid #dadbdc;
  }

  .tabs > button {
    justify-content: center;
    padding: 0 20px;
  }

  .tabs .file {
    width: 84px;
    color: #fff;
    background: #991f1f;
  }

  .tabs .current {
    width: 97px;
    height: 35px;
    padding: 0;
    background: #f5f6f7;
    border: 1px solid #dadbdc;
    border-bottom: 0;
  }

  .tabs-end {
    display: flex;
    gap: 11px;
    align-items: center;
    margin-left: auto;
    padding-right: 5px;
  }

  .help {
    justify-content: center;
    width: 22px;
    height: 22px;
    border: 1px solid #164e86;
    border-radius: 50%;
    font-size: 17px;
    color: #fff;
    background: #0a6fc8;
  }

  .ribbon {
    display: flex;
    height: 137px;
    font-size: 15px;
    line-height: 21px;
    color: #262626;
    background: #f5f6f7;
    border-bottom: 1px solid #dadbdc;
  }

  .group {
    display: flex;
    flex-direction: column;
    justify-content: space-between;
    box-sizing: border-box;
    margin: 3px 0;
    border-right: 1px solid #e2e3e4;
  }

  .group h2 {
    font-size: 15px;
    text-align: center;
    color: #555;
  }

  .clipboard {
    width: 506px;
  }

  .organize {
    width: 403px;
  }

  .create {
    width: 246px;
  }

  .open {
    width: 201px;
  }

  .select {
    width: 203px;
  }

  .tools {
    display: flex;
    align-items: flex-start;
    padding-left: 8px;
  }

  .organize .tools,
  .open .tools {
    padding-left: 3px;
  }

  .select .tools {
    padding-left: 6px;
  }

  button:disabled {
    color: #777;
  }

  .big {
    flex-direction: column;
    text-align: center;
  }

  .art {
    display: flex;
    align-items: center;
    justify-content: center;
    height: 60px;
  }

  .pin-tool {
    width: 158px;
  }

  .copy {
    width: 92px;
  }

  .paste {
    width: 72px;
  }

  .move {
    width: 102px;
  }

  .divider {
    width: 2px;
    height: 90px;
    margin: 7px 3px 0;
    background: #e0e1e3;
  }

  .delete {
    width: 68px;
  }

  .rename {
    width: 120px;
  }

  .new-folder {
    width: 56px;
  }

  .props {
    width: 76px;
  }

  .stack {
    display: flex;
    flex-direction: column;
    padding: 3px 0 0 4px;
  }

  .create .stack {
    padding-left: 8px;
  }

  .stack button {
    gap: 4px;
    height: 32px;
  }

  .open .stack button {
    height: 33px;
  }

  .caret {
    vertical-align: 5px;
  }

  .stack .caret {
    margin-bottom: 3px;
  }

  /* address row */
  .address-row {
    display: flex;
    align-items: center;
    padding: 5px 12px 7px 0;
  }

  .history {
    display: flex;
    align-items: center;
    gap: 20px;
    width: 140px;
    padding-left: 18px;
  }

  .forward {
    margin-left: 5px;
  }

  .address {
    display: flex;
    flex: 1;
    align-items: center;
    gap: 10px;
    height: 45px;
    padding-left: 2px;
    border: 1px solid #d9d9d9;
  }

  .drop {
    margin-left: auto;
    padding-right: 5px;
  }

  .refresh {
    justify-content: center;
    width: 47px;
    height: 45px;
    border-left: 1px solid #d9d9d9;
  }

  .search {
    display: flex;
    align-items: center;
    width: 464px;
    height: 45px;
    margin-left: 12px;
    border: 1px solid #d9d9d9;
  }

  .search svg {
    margin: 0 20px;
  }

  .search input {
    flex: 1;
    padding: 0;
    border: 0;
    outline: 0;
    font: inherit;
    background: none;
  }

  .search input::placeholder {
    color: #6d6d6d;
    opacity: 1;
  }

  .print-bar {
    display: flex;
    align-items: center;
    gap: 8px;
    height: 19px;
    padding-left: 8px;
    border-bottom: 1px solid #d9d9d9;
  }

  .print-bar strong {
    font: 700 15px 'Liberation Sans', sans-serif;
    color: #14248a;
  }

  .print-bar button {
    gap: 4px;
    line-height: 19px;
  }

  .big-caret {
    margin-left: 6px;
  }

  /* main area */
  main {
    display: flex;
    flex: 1;
  }

  .sidebar {
    display: flex;
    flex-direction: column;
    gap: 12px;
    width: 341px;
    padding: 24px 2px 0 0;
    border-right: 2px solid #f5f5f5;
  }

  .row {
    gap: 5px;
    width: 100%;
    height: 36px;
    padding-left: 48px;
  }

  .root {
    padding-left: 36px;
  }

  .selected {
    background: #d9d9d9;
  }

  .tile {
    display: flex;
    position: relative;
  }

  .shared {
    position: absolute;
    left: -9px;
    bottom: -2px;
  }

  .shared .icon,
  .pinned .icon {
    display: block;
  }

  .pinned {
    margin: 0 4px 0 auto;
  }

  .content {
    flex: 1;
    padding-left: 19px;
  }

  table {
    width: 905px;
    table-layout: fixed;
    border-collapse: collapse;
  }

  th {
    position: relative;
    height: 42px;
    padding: 0 0 0 9px;
    font-weight: 400;
    text-align: left;
    color: #4c607a;
    border-right: 1px solid #e5e5e5;
  }

  .sort {
    position: absolute;
    top: -8px;
    left: 0;
    right: 0;
    text-align: center;
  }

  .name {
    width: 381px;
  }

  .date {
    width: 206px;
  }

  .type {
    width: 170px;
  }

  .size {
    width: 110px;
  }

  tbody::before {
    content: '';
    display: block;
    height: 9px;
  }

  td {
    height: 32px;
    padding: 0 0 0 9px;
    color: #6d6d6d;
  }

  .file-name {
    display: flex;
    align-items: center;
    gap: 7px;
    color: #000;
  }

  .file-icon {
    display: flex;
  }

  .faded {
    opacity: 0.5;
  }

  aside {
    display: flex;
    align-items: center;
    justify-content: center;
    width: 413px;
    border-left: 2px solid #f5f5f5;
  }

  aside p {
    width: 340px;
    line-height: 25px;
    text-align: center;
    color: #6d6d6d;
  }

  .status {
    display: flex;
    align-items: center;
    height: 35px;
    padding-left: 22px;
    color: #1e395b;
  }

  .cell {
    display: flex;
    align-items: center;
    gap: 3px;
    margin-right: 16px;
    padding-right: 15px;
    border-right: 1px solid #eee;
  }

  .views {
    display: flex;
    gap: 5px;
    margin-left: auto;
    padding-right: 12px;
  }

  .views button {
    height: 35px;
  }

  .views .active {
    justify-content: center;
    width: 32px;
    box-sizing: border-box;
    background: #cce8f6;
    border: 1px solid #2a9fdc;
  }

  /* taskbar */
  .taskbar {
    display: flex;
    height: 60px;
    background: linear-gradient(
      90deg,
      #d3d6e7 0%,
      #d6d7e7 5%,
      #eddfe9 7%,
      #f3e2ea 15%,
      #ecdeda 24%,
      #f3e2ec 31%,
      #efdfe3 44%,
      #eadbdb 55%,
      #e8d9da 69%,
      #d4d6e6 71%,
      #d4d6e6 100%
    );
  }

  .task {
    justify-content: center;
    position: relative;
    width: 72px;
  }

  .task svg {
    font-family: 'Open Sans', sans-serif;
  }

  .app {
    width: 75px;
  }

  .running {
    background: linear-gradient(#cc2a2a, #cc2a2a) 50% 100% / 61px 4px no-repeat;
  }

  .explorer {
    width: 73px;
    margin: 0 2px 0 5px;
    background:
      linear-gradient(#cc2a2a, #cc2a2a) 0 100% / 66px 4px no-repeat,
      linear-gradient(#e0707c, #e0707c) 100% 100% / 7px 4px no-repeat,
      linear-gradient(90deg, #faf4f7 66px, #dcc9ce 66px, #dcc9ce 68px, #f5eaf0 68px);
  }

  .badge {
    position: absolute;
    right: 16px;
    bottom: 10px;
    width: 22px;
    height: 22px;
    border-radius: 50%;
    line-height: 22px;
    text-align: center;
    color: #fff;
    background: #fb0539;
  }

  .tray {
    display: flex;
    align-items: center;
    gap: 15px;
    margin-left: auto;
    padding-right: 8px;
  }

  .tray button {
    height: 60px;
  }

  .tray .battery {
    margin-left: -5px;
  }

  .tray .sound {
    margin-left: -2px;
  }

  .tray .lang {
    margin-right: 6px;
  }

  .tray .clock {
    flex-direction: column;
    justify-content: center;
    line-height: 27px;
  }

  .brand {
    margin: 0 22px 0 16px;
  }

  .notes {
    position: relative;
    padding-right: 29px;
    border-right: 2px solid #aaacb8;
  }

  .count {
    position: absolute;
    top: 27px;
    right: 15px;
    width: 25px;
    height: 25px;
    border: 1px solid #777;
    border-radius: 50%;
    font-size: 17px;
    font-weight: 600;
    line-height: 25px;
    text-align: center;
    background: #d3d3d6;
  }
</style>
